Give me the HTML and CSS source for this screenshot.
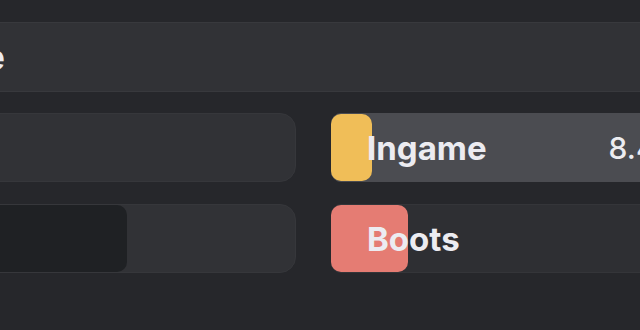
FILE: index.html
```html
<!DOCTYPE html>
<html lang="en">
<head>
    <meta charset="UTF-8">
    <meta name="viewport" content="width=device-width, initial-scale=1.0">
    <title>stats</title>
    <link rel="stylesheet" href="styles.css">
</head>
<body>
    <div class="board">
        <div class="topbar">
            <span class="title">Storage</span>
        </div>
        <div class="rows">
            <div class="card"></div>
            <div class="bar bar-light">
                <div class="fill fill-yellow" style="width: 41px;"></div>
                <span class="label">Ingame</span>
                <span class="value">8.4 GB</span>
            </div>
            <div class="card">
                <div class="fill fill-dark" style="width: 456px;"></div>
            </div>
            <div class="bar">
                <div class="fill fill-red" style="width: 77px;"></div>
                <span class="label">Boots</span>
            </div>
        </div>
    </div>
</body>
</html>
```
FILE: styles.css
```css
body{
    margin: 0;
    background-color: #26272b;
    font-family: "Inter", "Noto Sans", sans-serif;
    color: #ececf1;
    overflow: hidden;
}
.board{
    margin-left: -330px;
    width: 1300px;
    padding-top: 22px;
}
.topbar{
    height: 68px;
    background-color: #313236;
    border-top: 1px solid #38393d;
    border-bottom: 1px solid #38393d;
    display: flex;
    align-items: center;
}
.title{
    width: 335px;
    text-align: right;
    font-size: 36px;
    font-weight: 700;
}
.rows{
    display: grid;
    grid-template-columns: 626px 626px;
    column-gap: 35px;
    row-gap: 22px;
    margin-top: 21px;
}
.card, .bar{
    position: relative;
    height: 67px;
    border: 1px solid #36373b;
    border-radius: 16px;
    background-color: #313236;
    display: flex;
    align-items: center;
}
.bar{
    background-color: #2e2f33;
    border-color: #343539;
    border-radius: 10px;
}
.bar-light{
    background-color: #4b4c51;
    border-color: #4b4c51;
}
.fill{
    position: absolute;
    left: -1px;
    top: 0;
    bottom: 0;
    border-radius: 10px;
}
.fill-yellow{
    background-color: #f0be58;
}
.fill-red{
    background-color: #e57c73;
}
.fill-dark{
    left: 0;
    background-color: #1f2124;
    border-radius: 15px 10px 10px 15px;
}
.label{
    position: relative;
    margin-left: 35px;
    font-size: 33px;
    font-weight: 700;
}
.value{
    position: relative;
    margin-left: 122px;
    font-size: 30px;
    font-weight: 500;
}
```
